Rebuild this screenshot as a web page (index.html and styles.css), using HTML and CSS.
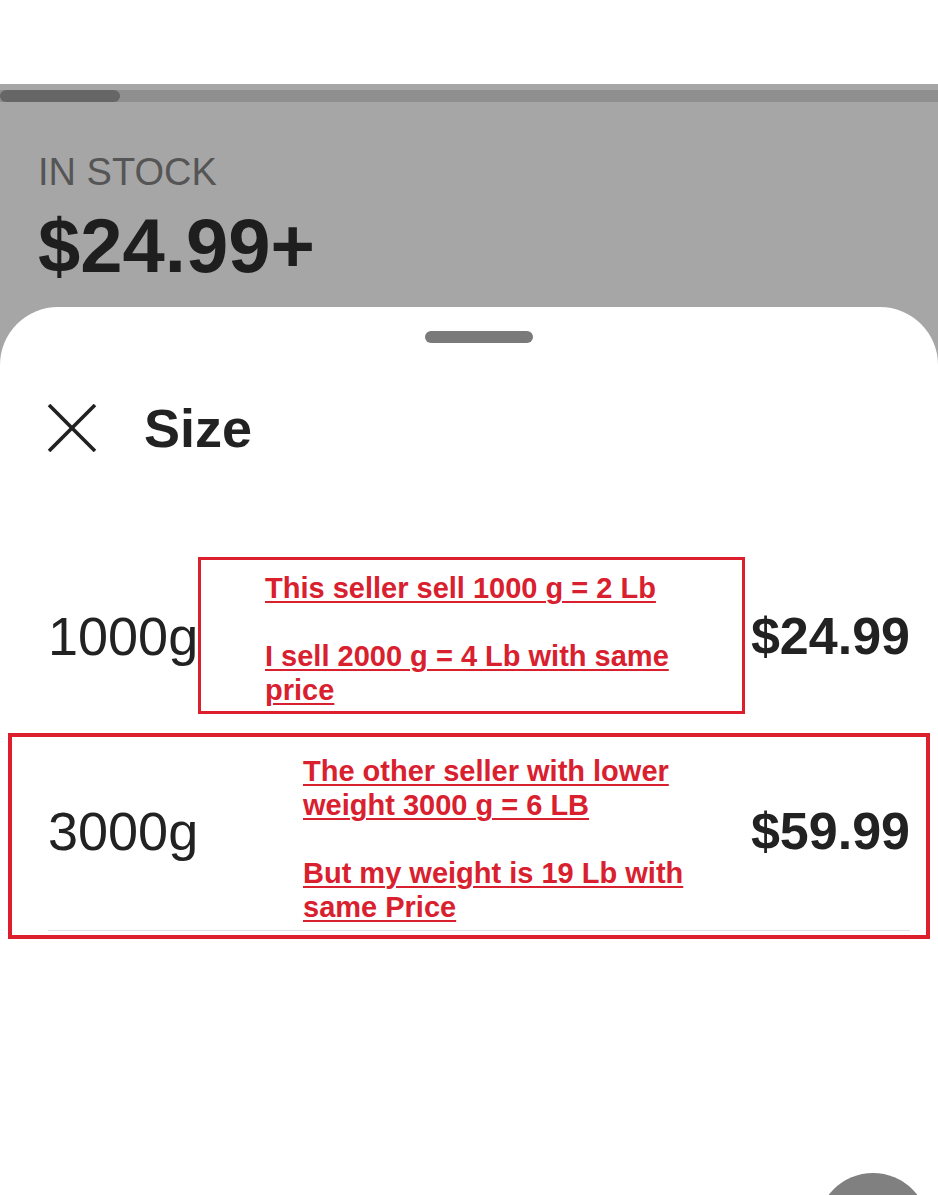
FILE: index.html
```html
<!DOCTYPE html>
<html lang="en">
<head>
<meta charset="utf-8">
<title>Size</title>
<link rel="stylesheet" href="styles.css">
</head>
<body>
<div class="top-blank"></div>
<div class="backdrop">
  <div class="progress"><div class="progress-thumb"></div></div>
  <div class="stock">
    <div class="stock-label">IN STOCK</div>
    <div class="stock-price">$24.99+</div>
  </div>
  <div class="sheet">
    <div class="handle"></div>
    <div class="sheet-header">
      <svg class="close-icon" width="50" height="48" viewBox="0 0 50 48" aria-hidden="true">
        <line x1="2" y1="1" x2="48" y2="47" stroke="#222" stroke-width="3.6"/>
        <line x1="48" y1="1" x2="2" y2="47" stroke="#222" stroke-width="3.6"/>
      </svg>
      <h1 class="sheet-title">Size</h1>
    </div>
    <div class="options">
      <div class="option option-one">
        <div class="opt-label narrow">1000g</div>
        <div class="note note-one">
          <p>This seller sell 1000 g = 2 Lb</p>
          <p>I sell 2000 g = 4 Lb with same<br>price</p>
        </div>
        <div class="opt-price">$24.99</div>
      </div>
      <div class="note-box">
        <div class="option option-two">
          <div class="opt-label wide">3000g</div>
          <div class="note note-two">
            <p>The other seller with lower<br>weight 3000 g = 6 LB</p>
            <p>But my weight is 19 Lb with<br>same Price</p>
          </div>
          <div class="opt-price push">$59.99</div>
        </div>
        <div class="divider"></div>
      </div>
    </div>
  </div>
</div>
<div class="fab"></div>
</body>
</html>
```

FILE: styles.css
```css
html, body {
  margin: 0;
  padding: 0;
  background: #ffffff;
  overflow: hidden;
  height: 1195px;
  font-family: "Liberation Sans", Arial, sans-serif;
  color: #222222;
}

.top-blank {
  height: 84px;
  background: #ffffff;
}

.backdrop {
  background: #a6a6a6;
}

.progress {
  padding-top: 6px;
  background: linear-gradient(#a6a6a6 0, #a6a6a6 6px, #8f8f8f 6px, #8f8f8f 18px, #a6a6a6 18px);
}

.progress-thumb {
  height: 12px;
  width: 120px;
  background: #666666;
  border-radius: 6px;
}

.stock {
  padding: 48px 0 0 38px;
}

.stock-label {
  font-size: 38px;
  line-height: 44px;
  color: #555555;
}

.stock-price {
  margin-top: 9px;
  font-size: 76px;
  line-height: 86px;
  font-weight: 700;
  color: #1e1e1e;
}

.sheet {
  margin-top: 18px;
  background: #ffffff;
  border-radius: 58px 58px 0 0;
  min-height: 888px;
  padding: 24px 28px 0 48px;
  box-sizing: border-box;
}

.handle {
  width: 108px;
  height: 12px;
  margin: 0 auto;
  background: #7a7a7a;
  border-radius: 6px;
}

.sheet-header {
  display: flex;
  align-items: center;
  gap: 47px;
  height: 60px;
  margin-top: 55px;
}

.close-icon {
  display: block;
  flex: none;
  margin-left: -1px;
}

.sheet-title {
  margin: 0;
  font-size: 54px;
  font-weight: 700;
  line-height: 60px;
  color: #222222;
}

.options {
  margin-top: 99px;
}

.option {
  display: flex;
  align-items: center;
}

.opt-label {
  flex: none;
  font-size: 54px;
  line-height: 60px;
  color: #222222;
}

.opt-label.narrow {
  width: 150px;
  white-space: nowrap;
}

.opt-label.wide {
  width: 255px;
  margin-bottom: 16px;
}

.opt-price {
  flex: none;
  font-size: 52px;
  line-height: 60px;
  font-weight: 700;
  color: #222222;
}

.opt-price.push {
  margin-left: auto;
  margin-bottom: 16px;
}

.note p {
  margin: 0;
  color: #d9202e;
  font-weight: 700;
  text-decoration: underline;
  text-decoration-thickness: 2px;
  text-underline-offset: 3px;
  line-height: 34px;
  white-space: nowrap;
}

.note p + p {
  margin-top: 34px;
}

.note-one {
  flex: 1;
  margin-right: 6px;
  border: 3px solid #dd1f2d;
  padding: 11px 0 4px 64px;
  min-width: 0;
}

.note-one p {
  font-size: 29px;
}

.note-two p {
  font-size: 29px;
  letter-spacing: 0;
}

.note-box {
  margin: 19px -20px 0 -40px;
  border: 4px solid #dd1f2d;
  padding: 17px 16px 4px 36px;
}

.divider {
  height: 1px;
  margin-top: 6px;
  background: #e0dce6;
}

.fab {
  position: fixed;
  left: 817px;
  top: 1173px;
  width: 112px;
  height: 112px;
  border-radius: 50%;
  background: #808080;
}
```
